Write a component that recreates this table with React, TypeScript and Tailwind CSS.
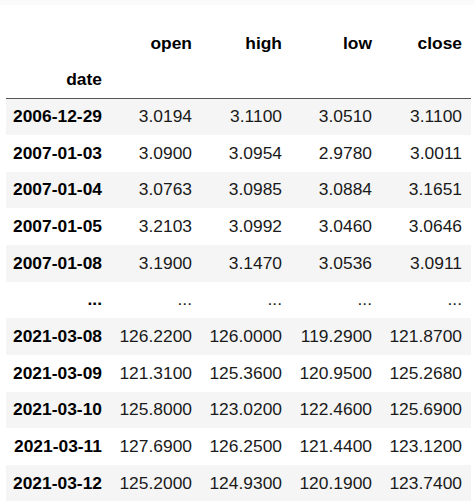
const columns = ['open', 'high', 'low', 'close'];

const rows: [string, string[]][] = [
  ['2006-12-29', ['3.0194', '3.1100', '3.0510', '3.1100']],
  ['2007-01-03', ['3.0900', '3.0954', '2.9780', '3.0011']],
  ['2007-01-04', ['3.0763', '3.0985', '3.0884', '3.1651']],
  ['2007-01-05', ['3.2103', '3.0992', '3.0460', '3.0646']],
  ['2007-01-08', ['3.1900', '3.1470', '3.0536', '3.0911']],
  ['...', ['...', '...', '...', '...']],
  ['2021-03-08', ['126.2200', '126.0000', '119.2900', '121.8700']],
  ['2021-03-09', ['121.3100', '125.3600', '120.9500', '125.2680']],
  ['2021-03-10', ['125.8000', '123.0200', '122.4600', '125.6900']],
  ['2021-03-11', ['127.6900', '126.2500', '121.4400', '123.1200']],
  ['2021-03-12', ['125.2000', '124.9300', '120.1900', '123.7400']],
];

export default function App() {
  return (
    <div
      className="w-[474px] h-[501px] bg-white overflow-hidden text-black"
      style={{ fontFamily: '"Liberation Sans", Arial, sans-serif' }}
    >
      <div className="h-[5px] bg-[#fafafa]" />
      <div className="pt-[20px] pl-[6px]">
        <table className="table-fixed border-collapse text-[17.4px] leading-none w-[465px]">
          <colgroup>
            <col className="w-[105px]" />
            <col className="w-[90px]" />
            <col className="w-[90px]" />
            <col className="w-[90px]" />
            <col className="w-[90px]" />
          </colgroup>
          <thead>
            <tr className="h-[36.6px]">
              <th />
              {columns.map((c) => (
                <th key={c} className="text-right font-bold pr-[9px]">
                  {c}
                </th>
              ))}
            </tr>
            <tr className="h-[36.6px] border-b-[1.5px] border-[#555]">
              <th className="text-right font-bold pr-[9px]">date</th>
              {columns.map((c) => (
                <th key={c} />
              ))}
            </tr>
          </thead>
          <tbody>
            {rows.map(([date, vals], i) => (
              <tr
                key={date + i}
                className={`h-[36.7px] ${i % 2 === 0 ? 'bg-[#f5f5f5]' : 'bg-white'}`}
              >
                <th className="text-right font-bold pr-[9px]">{date}</th>
                {vals.map((v, j) => (
                  <td key={j} className="text-right pr-[9px] text-[#1a1a1a]">
                    {v}
                  </td>
                ))}
              </tr>
            ))}
          </tbody>
        </table>
      </div>
    </div>
  );
}
